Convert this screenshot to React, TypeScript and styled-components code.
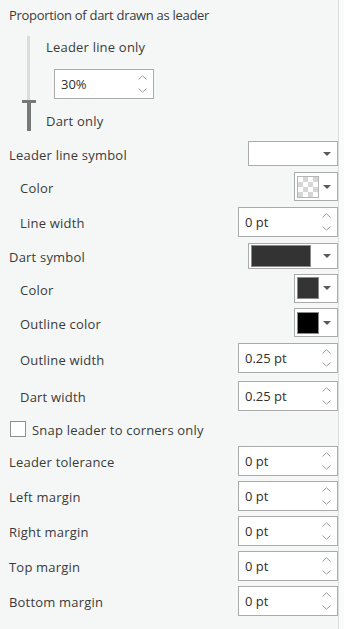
import React from "react";
import styled, { createGlobalStyle } from "styled-components";

const Global = createGlobalStyle`
  html, body { margin: 0; padding: 0; background: #fafbfb; }
  body { font-family: "Open Sans", "Noto Sans", sans-serif; }
`;

const Panel = styled.div`
  width: 339px;
  height: 629px;
  background: #f5f7f7;
  border-right: 1px solid #dcdcdc;
  color: #3a3a3a;
  font-size: 13px;
  box-sizing: border-box;
  display: flex;
  flex-direction: column;
`;

const Title = styled.div`
  height: 30px;
  display: flex;
  align-items: center;
  padding-left: 9px;
  letter-spacing: -0.3px;
`;

const SliderBlock = styled.div`
  display: flex;
  height: 106px;
`;

const SliderArt = styled.svg`
  width: 46px;
  height: 106px;
  flex: none;
`;

const SliderContent = styled.div`
  display: flex;
  flex-direction: column;
`;

const SliderLabel = styled.div<{ h: number; pt?: number }>`
  height: ${(p) => p.h}px;
  box-sizing: border-box;
  padding-top: ${(p) => p.pt ?? 0}px;
  display: flex;
  align-items: center;
  letter-spacing: 0.2px;
`;

const Row = styled.div<{ h: number; indent?: boolean }>`
  height: ${(p) => p.h}px;
  display: flex;
  align-items: center;
  justify-content: space-between;
  padding-left: ${(p) => (p.indent ? 20 : 9)}px;
`;

const Label = styled.span`
  padding-top: 3px;
  letter-spacing: 0.2px;
`;

const SpinBox = styled.div<{ ml?: number; mt?: number }>`
  width: 100px;
  height: 30px;
  flex: none;
  box-sizing: border-box;
  border: 1px solid #ababab;
  background: #fff;
  display: flex;
  align-items: center;
  justify-content: space-between;
  padding-left: 6px;
  padding-right: 6px;
  margin-left: ${(p) => p.ml ?? 0}px;
  margin-top: ${(p) => p.mt ?? 0}px;
  color: #2f2f2f;
`;

const Spinner = styled.div`
  display: flex;
  flex-direction: column;
  justify-content: space-between;
  height: 18px;
`;

const DropBox = styled.div<{ w: number; h: number }>`
  width: ${(p) => p.w}px;
  height: ${(p) => p.h}px;
  box-sizing: border-box;
  border: 1px solid #ababab;
  background: #fff;
  display: flex;
  align-items: center;
  justify-content: space-between;
  padding: 0 6px 0 2px;
`;

const Swatch = styled.div<{ w: number; h: number; fill: string }>`
  width: ${(p) => p.w}px;
  height: ${(p) => p.h}px;
  box-sizing: border-box;
  border: 1px solid #8a8a8a;
  background: ${(p) => p.fill};
`;

const Checker = styled.div`
  width: 22px;
  height: 22px;
  box-sizing: border-box;
  border: 1px solid #b5b5b5;
  background-color: #ffffff;
  background-image: linear-gradient(45deg, #d6d6d6 25%, transparent 25%, transparent 75%, #d6d6d6 75%),
    linear-gradient(45deg, #d6d6d6 25%, transparent 25%, transparent 75%, #d6d6d6 75%);
  background-size: 10px 10px;
  background-position: 0 0, 5px 5px;
`;

const CheckRow = styled.label`
  height: 29px;
  display: flex;
  align-items: center;
  padding-left: 10px;
  gap: 6px;
`;

const CheckBox = styled.span`
  width: 16px;
  height: 16px;
  box-sizing: border-box;
  border: 1px solid #8f8f8f;
  background: #fff;
  flex: none;
`;

const Chevron = ({ up }: { up?: boolean }) => (
  <svg width="9" height="5" viewBox="0 0 9 5">
    <path
      d={up ? "M0.5 4.5 L4.5 0.8 L8.5 4.5" : "M0.5 0.5 L4.5 4.2 L8.5 0.5"}
      fill="none"
      stroke="#9a9a9a"
      strokeWidth="1"
    />
  </svg>
);

const Arrow = () => (
  <svg width="8" height="4" viewBox="0 0 8 4">
    <path d="M0 0 H8 L4 4 Z" fill="#5a5a5a" />
  </svg>
);

const Spin = ({ value, ml, mt }: { value: string; ml?: number; mt?: number }) => (
  <SpinBox ml={ml} mt={mt}>
    <span>{value}</span>
    <Spinner>
      <Chevron up />
      <Chevron />
    </Spinner>
  </SpinBox>
);

const SwatchDrop = ({ fill }: { fill?: string }) => (
  <DropBox w={44} h={29}>
    {fill ? <Swatch w={22} h={22} fill={fill} /> : <Checker />}
    <Arrow />
  </DropBox>
);

export default function App() {
  return (
    <>
      <Global />
      <Panel>
        <Title>Proportion of dart drawn as leader</Title>
        <SliderBlock>
          <SliderArt viewBox="0 0 46 106">
            <rect x="27" y="6" width="3" height="65" fill="#dcdcdc" />
            <rect x="22" y="70" width="14" height="3" fill="#787878" />
            <rect x="27" y="70" width="4" height="31" fill="#787878" />
          </SliderArt>
          <SliderContent>
            <SliderLabel h={34}>Leader line only</SliderLabel>
            <Spin value="30%" ml={8} mt={5} />
            <SliderLabel h={37} pt={7}>Dart only</SliderLabel>
          </SliderContent>
        </SliderBlock>

        <Row h={35}>
          <Label>Leader line symbol</Label>
          <DropBox w={90} h={25}>
            <span />
            <Arrow />
          </DropBox>
        </Row>
        <Row h={31} indent>
          <Label>Color</Label>
          <SwatchDrop />
        </Row>
        <Row h={39} indent>
          <Label>Line width</Label>
          <Spin value="0 pt" />
        </Row>
        <Row h={29}>
          <Label>Dart symbol</Label>
          <DropBox w={90} h={26}>
            <Swatch w={60} h={22} fill="#333333" />
            <Arrow />
          </DropBox>
        </Row>
        <Row h={36} indent>
          <Label>Color</Label>
          <SwatchDrop fill="#343434" />
        </Row>
        <Row h={33} indent>
          <Label>Outline color</Label>
          <SwatchDrop fill="#000000" />
        </Row>
        <Row h={38} indent>
          <Label>Outline width</Label>
          <Spin value="0.25 pt" />
        </Row>
        <Row h={37} indent>
          <Label>Dart width</Label>
          <Spin value="0.25 pt" />
        </Row>
        <CheckRow>
          <CheckBox />
          <Label>Snap leader to corners only</Label>
        </CheckRow>
        <Row h={35}>
          <Label>Leader tolerance</Label>
          <Spin value="0 pt" />
        </Row>
        <Row h={35}>
          <Label>Left margin</Label>
          <Spin value="0 pt" />
        </Row>
        <Row h={35}>
          <Label>Right margin</Label>
          <Spin value="0 pt" />
        </Row>
        <Row h={35}>
          <Label>Top margin</Label>
          <Spin value="0 pt" />
        </Row>
        <Row h={35}>
          <Label>Bottom margin</Label>
          <Spin value="0 pt" />
        </Row>
      </Panel>
    </>
  );
}
